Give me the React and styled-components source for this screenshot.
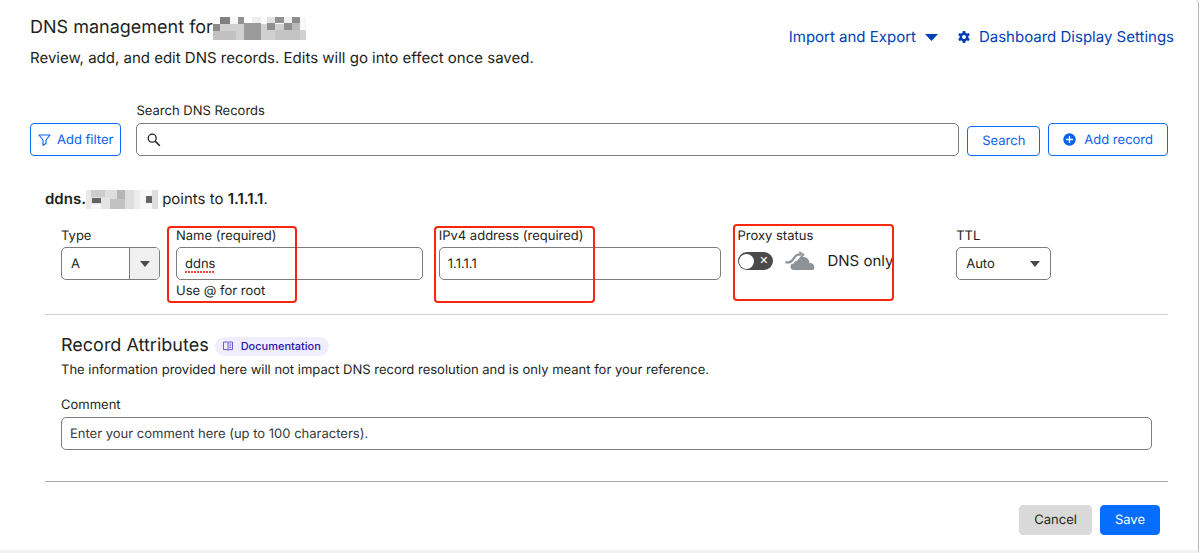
import React, { useState } from 'react'
import styled, { createGlobalStyle, css } from 'styled-components'

const GlobalStyle = createGlobalStyle`
*, *::before, *::after {
 box-sizing: border-box;
}

body {
 margin: 0;
 background: #ffffff;
 color: #1d1f20;
 font-family: Inter, 'Liberation Sans', sans-serif;
 font-size: 13px;
 line-height: 16px;
 text-rendering: geometricPrecision;
}

button, input, select {
 font: inherit;
 color: inherit;
 text-rendering: inherit;
}
`

const Panel = styled.main`
margin-right: 1px;
padding: 15px 30px 15px;
border-right: 1px solid #b5b5b5;
border-bottom: 3px solid #f2f2f2;
border-radius: 4px 4px 0 0;
`

const Header = styled.header`
display: flex;
justify-content: space-between;
align-items: flex-start;
`

const Title = styled.h1`
display: flex;
align-items: center;
margin: 0;
font-size: 18px;
font-weight: 400;
line-height: 26px;
`

const Subtitle = styled.p`
margin: 7px 0 0;
font-size: 15px;
line-height: 20px;
`

const HeaderLinks = styled.nav`
display: flex;
gap: 20px;
padding-top: 11px;
margin-right: -6px;
`

const HeaderLink = styled.a`
display: flex;
align-items: center;
gap: 9px;
color: #003fb8;
font-size: 15px;
line-height: 22px;
text-decoration: none;
`

const Toolbar = styled.form`
display: flex;
align-items: flex-end;
gap: 8px;
margin-top: 35px;
`

const SearchField = styled.div`
flex: 1;
margin-left: 7px;
`

const Label = styled.label`
display: block;
margin-bottom: 4px;
line-height: 16px;
`

const FieldLabel = styled(Label)`
margin-bottom: 3px;
`

const control = css`
width: 100%;
height: 33px;
border: 1px solid #7c7c7c;
border-radius: 5px;
background: #ffffff;
`

const Input = styled.input`
${control}
display: block;
padding: 0 8px;

&::placeholder {
 color: #36393a;
 opacity: 1;
}

${({ $misspelt }) => $misspelt && css`
 background: repeating-linear-gradient(90deg, #f0453a 0 2px, #ffffff 2px 3px) 8px 23px / 30px 2px no-repeat;
`}
`

const SearchBox = styled.div`
${control}
display: flex;
align-items: center;
gap: 8px;
padding: 0 10px;
`

const SearchInput = styled.input`
flex: 1;
min-width: 0;
border: 0;
outline: 0;
background: transparent;
`

const Button = styled.button`
display: inline-flex;
align-items: center;
justify-content: center;
gap: ${({ $tight }) => ($tight ? 6 : 8)}px;
height: ${({ $tall }) => ($tall ? 33 : 30)}px;
padding: 0 ${({ $tight }) => ($tight ? 7 : 14)}px;
border: 1px solid #0a6cff;
border-radius: 4px;
background: #ffffff;
color: #0a62f0;
cursor: pointer;

${({ $kind }) => $kind === 'primary' && css`
 background: #056dff;
 color: #ffffff;
`}

${({ $kind }) => $kind === 'neutral' && css`
 background: #d9d9d9;
 border-color: #d9d9d9;
 color: #1d1f20;
`}
`

const Record = styled.section`
margin: 33px 0 0 15px;
`

const Summary = styled.p`
display: flex;
align-items: center;
margin: 0;
font-size: 15px;
line-height: 20px;
white-space: pre;

strong {
 font-weight: 600;
}
`

const Fields = styled.div`
display: grid;
grid-template-columns: 99px 247fr 283fr 203fr 196fr;
gap: 16px;
padding: 19px 16px 15px;
`

const Field = styled.div`
position: relative;
`

const Hint = styled.div`
margin-top: 3px;
`

/* red callout drawn over the field */
const Callout = styled.div`
position: absolute;
top: ${({ $top }) => $top}px;
left: ${({ $left }) => $left}px;
width: ${({ $width }) => $width}px;
height: 77px;
border: 2px solid #f5280f;
border-radius: 4px;
pointer-events: none;
`

const SelectWrapper = styled.div`
position: relative;
width: ${({ $narrow }) => ($narrow ? '95px' : '100%')};
`

const Select = styled.select`
${control}
appearance: none;
padding: 0 32px 0 9px;
`

const SelectArrow = styled.span`
position: absolute;
top: 1px;
right: 1px;
bottom: 1px;
display: flex;
align-items: center;
justify-content: center;
width: 30px;
border-radius: 0 4px 4px 0;
pointer-events: none;

${({ $filled }) => $filled && css`
 border-left: 1px solid #7c7c7c;
 background: #f0f0f0;
`}
`

const ProxyRow = styled.div`
display: flex;
align-items: center;
gap: 12px;
height: 28px;
padding-left: 1px;
font-size: 15px;
white-space: nowrap;
`

const Toggle = styled.input`
appearance: none;
display: grid;
align-items: center;
width: 35px;
height: 18px;
margin: 0;
border-radius: 9px;
background: #4a4a4a;
cursor: pointer;

&::before {
 content: '';
 grid-area: 1 / 1;
 width: 15px;
 height: 15px;
 margin-left: 1px;
 border-radius: 50%;
 background: #ffffff;
}

&::after {
 content: '✕';
 grid-area: 1 / 1;
 justify-self: end;
 margin-right: 5px;
 color: #ffffff;
 font: 11px/18px 'DejaVu Sans', sans-serif;
}

&:checked {
 background: #056dff;
}

&:checked::before {
 justify-self: end;
 margin-right: 1px;
}

&:checked::after {
 content: none;
}
`

const Attributes = styled.div`
padding: 19px 16px 31px;
border: solid #d2d2d2;
border-width: 1px 0 0;
`

const AttributesHeader = styled.div`
display: flex;
align-items: center;
gap: 6px;
`

const SectionHeader = styled.h2`
margin: 0;
font-size: 18px;
font-weight: 400;
line-height: 24px;
`

const DocsLink = styled.a`
display: flex;
align-items: center;
gap: 8px;
height: 19px;
padding: 0 8px;
border-radius: 10px;
background: #f0eefc;
color: #2a13b0;
font-size: 11px;
font-weight: 500;
text-decoration: none;
`

const SectionContent = styled.p`
margin: 4px 0 19px;
line-height: 16px;
`

const Actions = styled.footer`
display: flex;
justify-content: flex-end;
gap: 8px;
padding: 23px 8px 0 0;
border-top: 1px solid #ababab;
`

const Caret = ({ width = 10, height = 6, color = '#4a4a4a' }) => (
    <svg width={width} height={height} viewBox="0 0 10 6" preserveAspectRatio="none" aria-hidden="true">
        <path d="M0 0h10L5 6z" fill={color} />
    </svg>
)

const FilterIcon = () => (
    <svg width="13" height="12" viewBox="0 0 13 12" fill="none" stroke="#0a62f0" strokeWidth="1.1" strokeLinejoin="round" aria-hidden="true">
        <path d="M1 1h11L8 6v3.5L5 11.2V6z" />
    </svg>
)

const SearchIcon = () => (
    <svg width="14" height="14" viewBox="0 0 14 14" fill="none" stroke="#1d1f20" aria-hidden="true">
        <circle cx="5.2" cy="5.2" r="4" strokeWidth="1.3" />
        <path d="M8.2 8.2l4.6 4.6" strokeWidth="1.6" />
    </svg>
)

const PlusIcon = () => (
    <svg width="13" height="13" viewBox="0 0 13 13" aria-hidden="true">
        <circle cx="6.5" cy="6.5" r="6.2" fill="#0a62f0" />
        <path d="M6.5 3v7M3 6.5h7" stroke="#ffffff" strokeWidth="1.3" />
    </svg>
)

const GearIcon = () => (
    <svg width="12" height="12" viewBox="0 0 12 12" aria-hidden="true">
        <circle cx="6" cy="6" r="3.2" fill="none" stroke="#003fb8" strokeWidth="2.4" />
        {[0, 60, 120, 180, 240, 300].map((angle) => (
            <path key={angle} d="M4.4 2.4L4.8 0h2.4l.4 2.4z" fill="#003fb8" transform={`rotate(${angle} 6 6)`} />
        ))}
    </svg>
)

const BookIcon = () => (
    <svg width="10" height="10" viewBox="0 0 10 10" fill="none" stroke="#5a48d8" strokeWidth=".9" aria-hidden="true">
        <path d="M.5 1h3.7L5 1.6 5.8 1h3.7v7.6H5.8L5 9.3l-.8-.7H.5zM5 1.6v7.6M6.4 3h1.8M6.4 4.8h1.8M6.4 6.6h1.8" />
    </svg>
)

const CloudIcon = () => (
    <svg width="30" height="20" viewBox="0 0 30 20" aria-hidden="true">
        <path d="M8.6 19a3.3 3.3 0 0 1-3.1-3.2 3.2 3.2 0 0 1 3.2-3.4 3.3 3.3 0 0 1 3.6-2.6 6.3 6.3 0 0 1 12.1 2.2 4.2 4.2 0 0 1 4.9 4.4q0 2.6-1.6 2.6z" fill="#8d9297" />
        <path d="M.4 11.4h3.2c5 0 5.2-7.8 9.6-7.8h3" fill="none" stroke="#ffffff" strokeWidth="4.4" />
        <path d="M.4 11.4h3.2c5 0 5.2-7.8 9.6-7.8h3" fill="none" stroke="#8d9297" strokeWidth="2.2" />
        <path d="M14.2 1l4.2 2.6-3 3.6" fill="none" stroke="#8d9297" strokeWidth="1.8" />
    </svg>
)

/* x, y, width, height, colour */
const ZONE_BLOCKS = [
    [0, 0, 93, 7, '#ffffff'],
    [0, 7, 93, 16, '#d0d0d0'],
    [0, 7, 7, 7, '#8b8b8b'],
    [7, 0, 10, 7, '#808080'],
    [17, 0, 7, 7, '#f6f6f6'],
    [25, 0, 6, 7, '#929292'],
    [39, 0, 9, 6, '#eeeeee'],
    [54, 0, 8, 6, '#e2e2e2'],
    [62, 0, 9, 6, '#929292'],
    [71, 0, 8, 6, '#f2f2f2'],
    [79, 0, 8, 6, '#8d8d8d'],
    [0, 14, 23, 9, '#c1c1c1'],
    [31, 6, 17, 17, '#9b9b9b'],
    [54, 6, 8, 7, '#8f8f8f'],
    [71, 6, 8, 7, '#8f8f8f'],
    [79, 6, 8, 7, '#bababa'],
    [87, 0, 6, 13, '#f8f8f8'],
    [62, 13, 25, 10, '#c4c4c4'],
]

const RECORD_BLOCKS = [
    [0, 0, 72, 19, '#dedede'],
    [0, 0, 5, 19, '#e8e8e8'],
    [5, 0, 14, 7, '#cccccc'],
    [5, 7, 10, 7, '#e0e0e0'],
    [6, 8, 9, 5, '#646464'],
    [5, 14, 10, 5, '#f6f6f6'],
    [15, 7, 9, 12, '#e4e4e4'],
    [24, 9, 15, 10, '#c2c2c2'],
    [31, 0, 8, 9, '#b5b5b5'],
    [48, 0, 6, 19, '#ececec'],
    [54, 0, 12, 19, '#f7f7f7'],
    [60, 6, 6, 7, '#646464'],
]

const Redacted = ({ blocks, width, height }) => (
    <svg width={width} height={height} shapeRendering="crispEdges" aria-hidden="true">
        {blocks.map(([x, y, w, h, fill]) => (
            <rect key={`${x}-${y}-${w}`} x={x} y={y} width={w} height={h} fill={fill} />
        ))}
    </svg>
)

const App = () => {
    const [name, setName] = useState('ddns')
    const [address, setAddress] = useState('1.1.1.1')
    const [proxied, setProxied] = useState(false)

    return (
        <>
            <GlobalStyle />
            <Panel>
                <Header>
                    <div>
                        <Title>
                            DNS management for
                            <Redacted blocks={ZONE_BLOCKS} width={93} height={23} />
                        </Title>
                        <Subtitle>Review, add, and edit DNS records. Edits will go into effect once saved.</Subtitle>
                    </div>
                    <HeaderLinks>
                        <HeaderLink href="#import">
                            Import and Export
                            <Caret width={13} height={7} color="#003fb8" />
                        </HeaderLink>
                        <HeaderLink href="#settings">
                            <GearIcon />
                            Dashboard Display Settings
                        </HeaderLink>
                    </HeaderLinks>
                </Header>

                <Toolbar onSubmit={(e) => e.preventDefault()}>
                    <Button type="button" $tall $tight>
                        <FilterIcon />
                        Add filter
                    </Button>
                    <SearchField>
                        <Label htmlFor="search">Search DNS Records</Label>
                        <SearchBox>
                            <SearchIcon />
                            <SearchInput id="search" type="text" />
                        </SearchBox>
                    </SearchField>
                    <Button type="submit">Search</Button>
                    <Button type="button" $tall>
                        <PlusIcon />
                        Add record
                    </Button>
                </Toolbar>

                <Record>
                    <Summary>
                        <strong>ddns.</strong>
                        <Redacted blocks={RECORD_BLOCKS} width={72} height={19} />
                        {' points to '}
                        <strong>1.1.1.1</strong>.
                    </Summary>

                    <Fields>
                        <Field>
                            <FieldLabel htmlFor="type">Type</FieldLabel>
                            <SelectWrapper>
                                <Select id="type" defaultValue="A">
                                    <option>A</option>
                                </Select>
                                <SelectArrow $filled><Caret /></SelectArrow>
                            </SelectWrapper>
                        </Field>
                        <Field>
                            <FieldLabel htmlFor="name">Name (required)</FieldLabel>
                            <Input id="name" type="text" $misspelt={name === 'ddns'} value={name} onChange={(e) => setName(e.target.value)} />
                            <Hint>Use @ for root</Hint>
                            <Callout $top={-2} $left={-9} $width={130} />
                        </Field>
                        <Field>
                            <FieldLabel htmlFor="address">IPv4 address (required)</FieldLabel>
                            <Input id="address" type="text" value={address} onChange={(e) => setAddress(e.target.value)} />
                            <Callout $top={-2} $left={-5} $width={161} />
                        </Field>
                        <Field>
                            <FieldLabel htmlFor="proxy">Proxy status</FieldLabel>
                            <ProxyRow>
                                <Toggle id="proxy" type="checkbox" role="switch" checked={proxied} onChange={(e) => setProxied(e.target.checked)} />
                                <CloudIcon />
                                DNS only
                            </ProxyRow>
                            <Callout $top={-4} $left={-4} $width={161} />
                        </Field>
                        <Field>
                            <FieldLabel htmlFor="ttl">TTL</FieldLabel>
                            <SelectWrapper $narrow>
                                <Select id="ttl" defaultValue="Auto">
                                    <option>Auto</option>
                                </Select>
                                <SelectArrow><Caret /></SelectArrow>
                            </SelectWrapper>
                        </Field>
                    </Fields>

                    <Attributes>
                        <AttributesHeader>
                            <SectionHeader>Record Attributes</SectionHeader>
                            <DocsLink href="#docs">
                                <BookIcon />
                                Documentation
                            </DocsLink>
                        </AttributesHeader>
                        <SectionContent>
                            The information provided here will not impact DNS record resolution and is only meant for your reference.
                        </SectionContent>
                        <Label htmlFor="comment">Comment</Label>
                        <Input id="comment" type="text" placeholder="Enter your comment here (up to 100 characters)." />
                    </Attributes>

                    <Actions>
                        <Button type="button" $kind="neutral">Cancel</Button>
                        <Button type="button" $kind="primary">Save</Button>
                    </Actions>
                </Record>
            </Panel>
        </>
    )
}

export default App
